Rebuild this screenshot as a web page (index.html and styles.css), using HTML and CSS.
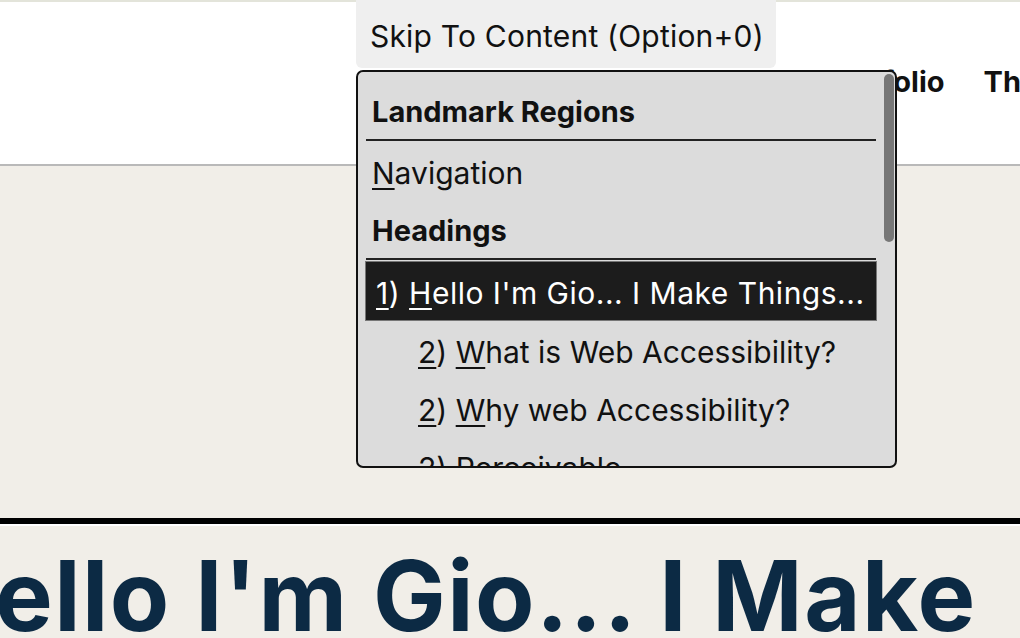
FILE: index.html
```html
<!DOCTYPE html>
<html lang="en">
<head>
<meta charset="utf-8">
<title>Gio</title>
<link rel="stylesheet" href="styles.css">
</head>
<body>
<header class="site-header">
  <nav class="nav">
    <a class="nav-link" href="#">Portfolio</a>
    <a class="nav-link" href="#">Thoughts</a>
  </nav>
</header>
<section class="band"></section>
<main class="main">
  <h1 class="hero">Hello I'm Gio... I Make Things...</h1>
</main>

<div class="skipto">
  <button class="skip-btn">Skip To Content (Option+0)</button>
  <div class="menu">
    <div class="menu-list">
      <div class="group-label">Landmark Regions</div>
      <div class="item"><u>N</u>avigation</div>
      <div class="group-label">Headings</div>
      <div class="item active"><u>1</u>) <u>H</u>ello I'm Gio... I Make Things...</div>
      <div class="item sub"><u>2</u>) <u>W</u>hat is Web Accessibility?</div>
      <div class="item sub"><u>2</u>) <u>W</u>hy web Accessibility?</div>
      <div class="item sub"><u>2</u>) <u>P</u>erceivable</div>
    </div>
    <div class="scrolltrack"><div class="thumb"></div></div>
  </div>
</div>
</body>
</html>
```
FILE: styles.css
```css
* { box-sizing: border-box; }
html, body { margin: 0; padding: 0; }
body {
  width: 1020px;
  height: 638px;
  overflow: hidden;
  background: #f1eee8;
  font-family: "Inter", "Noto Sans", sans-serif;
  font-variant-ligatures: none;
  color: #111;
  position: relative;
}
.site-header {
  height: 166px;
  background: #fff;
  border-top: 2px solid #e3e4da;
  border-bottom: 2px solid #b9b9b9;
  overflow: hidden;
}
.nav {
  display: flex;
  gap: 39px;
  padding-left: 824px;
  padding-top: 62px;
  white-space: nowrap;
}
.nav-link {
  font-weight: 700;
  font-size: 29px;
  color: #111;
  text-decoration: none;
}
.band {
  height: 352px;
}
.main {
  border-top: 6px solid #000;
  box-shadow: inset 0 2px 0 #fff;
  padding-top: 14px;
  height: 120px;
  overflow: hidden;
}
.hero {
  margin: 0 0 0 -79px;
  width: 1095px;
  font-size: 97px;
  font-weight: 700;
  color: #0c2a44;
  line-height: 1.2;
  letter-spacing: 1.5px;
}

.skipto {
  position: absolute;
  left: 356px;
  top: 0;
  width: 541px;
}
.skip-btn {
  display: block;
  width: 420px;
  height: 68px;
  border: 0;
  margin: 0;
  padding: 4px 0 0 14px;
  text-align: left;
  background: #efefef;
  border-radius: 0 0 6px 6px;
  font-family: inherit;
  font-size: 30px;
  letter-spacing: 0.2px;
  color: #111;
}
.menu {
  margin-top: 2px;
  height: 398px;
  background: #dcdcdc;
  border: 2px solid #111;
  border-radius: 7px;
  display: flex;
  overflow: hidden;
}
.menu-list {
  flex: 1;
  padding: 8px 5px 0 8px;
  overflow: hidden;
}
.group-label {
  font-weight: 700;
  font-size: 29px;
  height: 61px;
  padding: 14px 0 0 6px;
  border-bottom: 2px solid #222;
  margin-bottom: 2px;
}
.group-label + .item + .group-label { height: 59px; padding-top: 12px; }
.item {
  font-size: 30px;
  height: 58px;
  padding: 12px 0 0 6px;
  white-space: nowrap;
}
.item u { text-underline-offset: 4px; text-decoration-thickness: 2px; }
.item.active {
  background: #1c1c1c;
  color: #fff;
  outline: 1px solid #777;
  padding: 13px 0 0 10px;
  letter-spacing: 0.5px;
}
.item.sub { padding-left: 52px; padding-top: 14px; }
.scrolltrack {
  width: 14px;
  padding: 2px 1px 0 3px;
}
.thumb {
  height: 168px;
  background: #777;
  border-radius: 6px;
}
```
